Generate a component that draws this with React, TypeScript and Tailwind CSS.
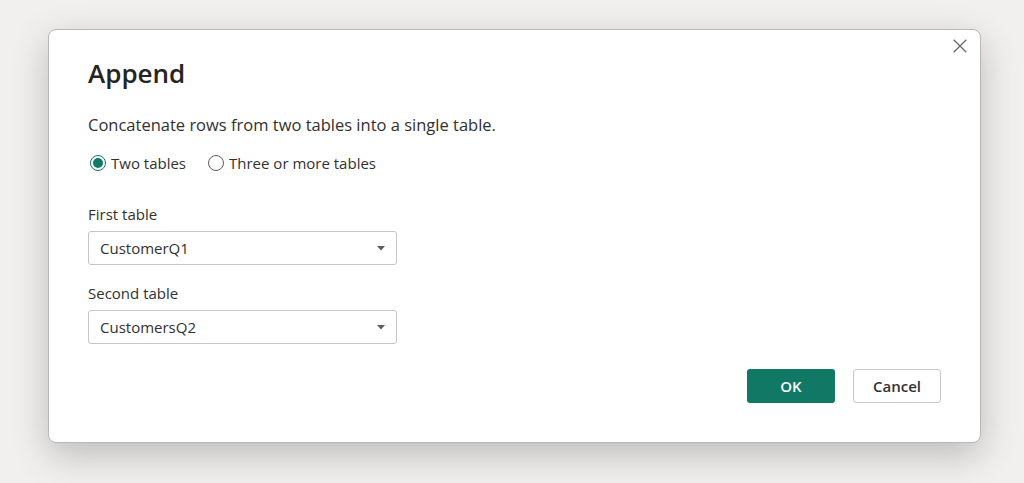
import React from "react";

function Caret() {
  return (
    <svg width="8" height="5" viewBox="0 0 8 5" className="shrink-0">
      <path d="M0 0 L8 0 L4 4.5 Z" fill="#605e5c" />
    </svg>
  );
}

function Dropdown({ value }: { value: string }) {
  return (
    <div className="w-[309px] h-[34px] border border-[#c8c6c4] rounded-[3px] flex items-center justify-between pl-[11px] pr-[11px] text-[15px] text-[#323130]">
      <span>{value}</span>
      <Caret />
    </div>
  );
}

export default function App() {
  return (
    <div
      className="w-[1024px] h-[483px] bg-[#f1f0ef] pt-[29px] pl-[48px] overflow-hidden"
      style={{ fontFamily: '"Open Sans", "Noto Sans", sans-serif' }}
    >
      <div className="relative w-[933px] h-[414px] bg-white rounded-[8px] border border-[#b8b8b8] shadow-[0_12px_36px_rgba(0,0,0,0.22)] px-[39px] pt-[26px] flex flex-col">
        <button className="absolute right-[13px] top-[9px] w-[14px] h-[14px] flex items-center justify-center">
          <svg width="14" height="14" viewBox="0 0 14 14">
            <path d="M0.7 0.7 L13.3 13.3 M13.3 0.7 L0.7 13.3" stroke="#666" strokeWidth="1.3" fill="none" />
          </svg>
        </button>
        <h1 className="text-[26px] leading-[34px] font-semibold text-[#252423]">Append</h1>
        <p className="mt-[25px] text-[16.5px] leading-[20px] text-[#323130]">
          Concatenate rows from two tables into a single table.
        </p>
        <div className="mt-[18px] flex items-center h-[20px] text-[15px] text-[#323130]">
          <div className="flex items-center">
            <span className="w-[16px] h-[16px] rounded-full border border-[#117865] flex items-center justify-center ml-[2px]">
              <span className="w-[10px] h-[10px] rounded-full bg-[#117865]" />
            </span>
            <span className="ml-[5px]">Two tables</span>
          </div>
          <div className="flex items-center ml-[22px]">
            <span className="w-[16px] h-[16px] rounded-full border border-[#605e5c]" />
            <span className="ml-[5px]">Three or more tables</span>
          </div>
        </div>
        <div className="mt-[31px] text-[15px] leading-[20px] text-[#323130]">First table</div>
        <div className="mt-[7px]">
          <Dropdown value="CustomerQ1" />
        </div>
        <div className="mt-[18px] text-[15px] leading-[20px] text-[#323130]">Second table</div>
        <div className="mt-[7px]">
          <Dropdown value="CustomersQ2" />
        </div>
        <div className="mt-[25px] flex justify-end gap-[18px]">
          <button className="w-[88px] h-[34px] rounded-[3px] bg-[#117865] text-white text-[15px] font-semibold">OK</button>
          <button className="w-[88px] h-[34px] rounded-[3px] border border-[#c8c6c4] bg-white text-[#323130] text-[15px] font-semibold">
            Cancel
          </button>
        </div>
      </div>
    </div>
  );
}
